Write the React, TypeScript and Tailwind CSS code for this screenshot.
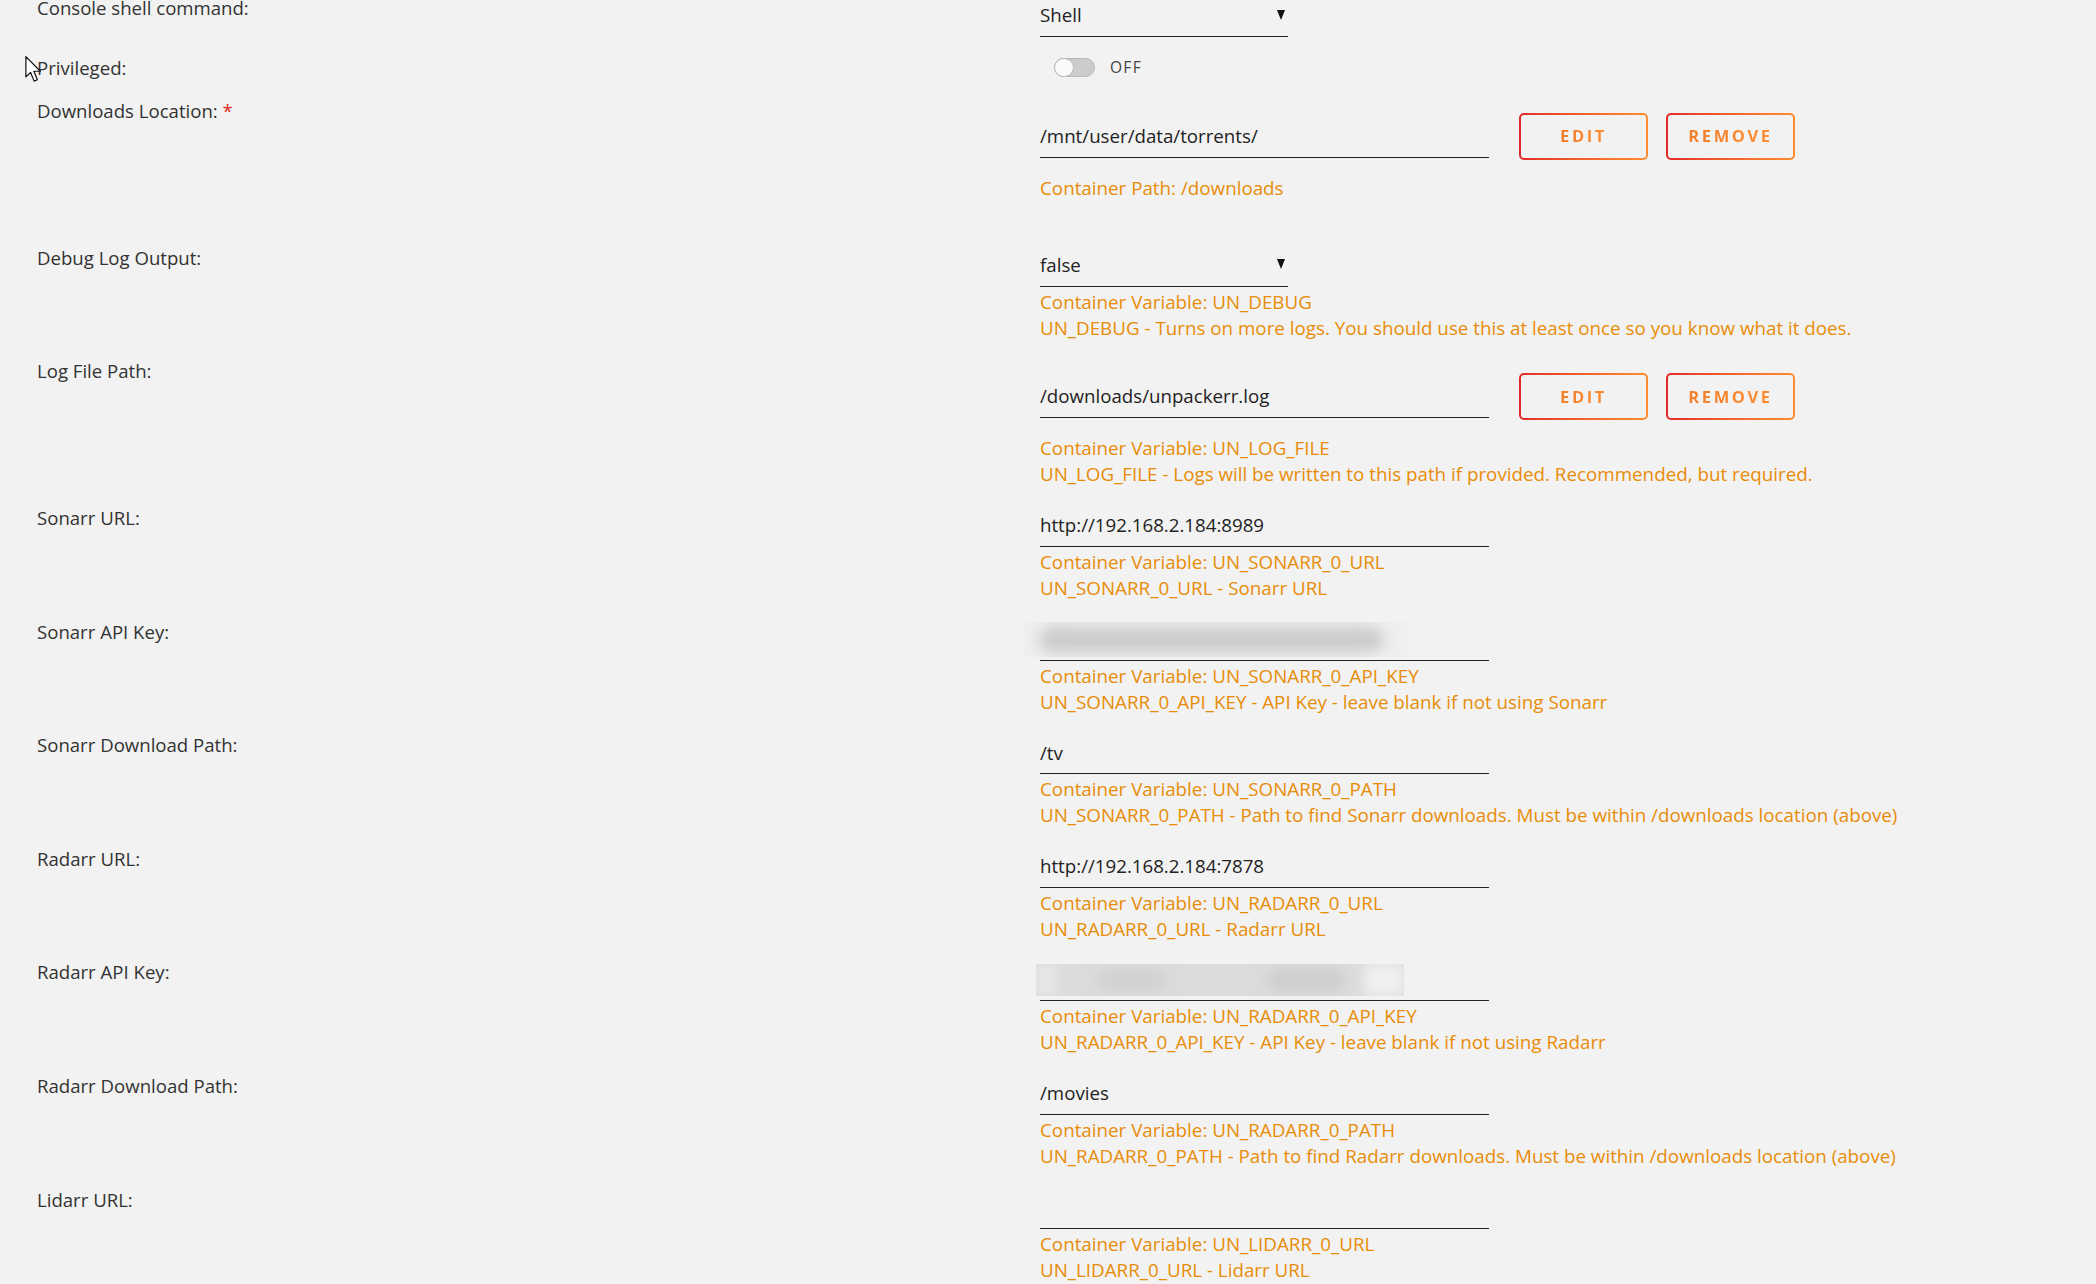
import React from "react";

const font = { fontFamily: '"Open Sans", "Noto Sans", sans-serif' };

function Row({ label, required, children }: { label: string; required?: boolean; children: React.ReactNode }) {
  return (
    <div className="flex pb-[17.6px]">
      <div className="w-[1040px] shrink-0 pl-[37px] text-[18.6px] leading-[26px] text-[#333333]">
        {label}
        {required && <span className="text-[#e22828]"> *</span>}
      </div>
      <div className="flex flex-col">{children}</div>
    </div>
  );
}

function Desc({ lines, gap = "mt-[2px]" }: { lines: string[]; gap?: string }) {
  return (
    <div className={`${gap} flex flex-col text-[18.8px] leading-[26px] text-[#e88c08]`}>
      {lines.map((l, i) => (
        <div key={i} className="h-[26px] whitespace-nowrap">
          {l}
        </div>
      ))}
    </div>
  );
}

function Select({ value }: { value: string }) {
  return (
    <div className="flex h-[42px] w-[248px] items-center justify-between border-b-[1.5px] border-[#222222] pr-[3px] text-[18.7px] text-[#222222]">
      <span>{value}</span>
      <svg width="8" height="10" viewBox="0 0 8 10" className="mt-[-2px]">
        <path d="M0 0 L8 0 L4 10 Z" fill="#111111" />
      </svg>
    </div>
  );
}

function Input({ value, blur }: { value?: string; blur?: "a" | "b" }) {
  return (
    <div className="relative flex h-[42px] w-[449px] items-center border-b-[1.5px] border-[#222222] text-[18.7px] text-[#222222]">
      <span>{value}</span>
      {blur === "a" && (
        <div className="absolute left-[-17px] top-[3px] h-[35px] w-[385px] overflow-hidden bg-[#efefef]">
          <div className="absolute left-[16px] top-[5px] h-[25px] w-[345px] rounded-full bg-[#cbcbcb] blur-[7px]" />
        </div>
      )}
      {blur === "b" && (
        <div className="absolute left-[-4px] top-[5px] h-[32px] w-[368px] overflow-hidden bg-[#dcdcdc]">
          <div className="absolute left-[0px] top-[0px] h-[32px] w-[20px] bg-[#e6e6e6] blur-[4px]" />
          <div className="absolute left-[60px] top-[4px] h-[24px] w-[70px] rounded-full bg-[#d2d2d2] blur-[6px]" />
          <div className="absolute left-[230px] top-[4px] h-[24px] w-[80px] rounded-full bg-[#cfcfcf] blur-[6px]" />
          <div className="absolute right-[0px] top-[0px] h-[32px] w-[40px] bg-[#f0f0f0] blur-[6px]" />
        </div>
      )}
    </div>
  );
}

function GButton({ text }: { text: string }) {
  return (
    <div className="h-[47px] w-[129px] rounded-[5px] bg-gradient-to-r from-[#e22828] to-[#ff8c2f] p-[2px]">
      <div className="flex h-full w-full items-center justify-center rounded-[3px] bg-[#f2f2f2]">
        <span className="bg-gradient-to-r from-[#f27e2a] to-[#ff8c2f] bg-clip-text text-[16.5px] font-bold tracking-[2.6px] text-transparent">
          {text}
        </span>
      </div>
    </div>
  );
}

function InputWithButtons({ value }: { value: string }) {
  return (
    <div className="flex items-center pt-[15px]">
      <Input value={value} />
      <div className="ml-[30px] flex gap-[18px]">
        <GButton text="EDIT" />
        <GButton text="REMOVE" />
      </div>
    </div>
  );
}

export default function App() {
  return (
    <div className="relative h-[1284px] w-full overflow-hidden bg-[#f2f2f2]" style={font}>
      <div className="mt-[-5px] flex flex-col">
        <Row label="Console shell command:">
          <Select value="Shell" />
        </Row>
        <Row label="Privileged:">
          <div className="flex h-[26px] items-center pl-[14px]">
            <div className="relative h-[19px] w-[41px] rounded-full border border-[#b9b9b9] bg-[#cccccc]">
              <div className="absolute left-[-1px] top-[-1px] h-[19px] w-[20px] rounded-full border border-[#b9b9b9] bg-[#fafafa]" />
            </div>
            <span className="ml-[15px] text-[15.5px] tracking-[1.3px] text-[#444444]">OFF</span>
          </div>
        </Row>
        <Row label="Downloads Location:" required>
          <InputWithButtons value="/mnt/user/data/torrents/" />
          <Desc gap="mt-[15px]" lines={["Container Path: /downloads", ""]} />
        </Row>
        <Row label="Debug Log Output:">
          <Select value="false" />
          <Desc
            lines={[
              "Container Variable: UN_DEBUG",
              "UN_DEBUG - Turns on more logs. You should use this at least once so you know what it does.",
            ]}
          />
        </Row>
        <Row label="Log File Path:">
          <InputWithButtons value="/downloads/unpackerr.log" />
          <Desc
            gap="mt-[15px]"
            lines={[
              "Container Variable: UN_LOG_FILE",
              "UN_LOG_FILE - Logs will be written to this path if provided. Recommended, but required.",
            ]}
          />
        </Row>
        <Row label="Sonarr URL:">
          <Input value="http://192.168.2.184:8989" />
          <Desc lines={["Container Variable: UN_SONARR_0_URL", "UN_SONARR_0_URL - Sonarr URL"]} />
        </Row>
        <Row label="Sonarr API Key:">
          <Input blur="a" />
          <Desc
            lines={[
              "Container Variable: UN_SONARR_0_API_KEY",
              "UN_SONARR_0_API_KEY - API Key - leave blank if not using Sonarr",
            ]}
          />
        </Row>
        <Row label="Sonarr Download Path:">
          <Input value="/tv" />
          <Desc
            lines={[
              "Container Variable: UN_SONARR_0_PATH",
              "UN_SONARR_0_PATH - Path to find Sonarr downloads. Must be within /downloads location (above)",
            ]}
          />
        </Row>
        <Row label="Radarr URL:">
          <Input value="http://192.168.2.184:7878" />
          <Desc lines={["Container Variable: UN_RADARR_0_URL", "UN_RADARR_0_URL - Radarr URL"]} />
        </Row>
        <Row label="Radarr API Key:">
          <Input blur="b" />
          <Desc
            lines={[
              "Container Variable: UN_RADARR_0_API_KEY",
              "UN_RADARR_0_API_KEY - API Key - leave blank if not using Radarr",
            ]}
          />
        </Row>
        <Row label="Radarr Download Path:">
          <Input value="/movies" />
          <Desc
            lines={[
              "Container Variable: UN_RADARR_0_PATH",
              "UN_RADARR_0_PATH - Path to find Radarr downloads. Must be within /downloads location (above)",
            ]}
          />
        </Row>
        <Row label="Lidarr URL:">
          <Input value="" />
          <Desc lines={["Container Variable: UN_LIDARR_0_URL", "UN_LIDARR_0_URL - Lidarr URL"]} />
        </Row>
      </div>
      <svg
        className="absolute left-[25px] top-[56px]"
        width="18"
        height="27"
        viewBox="0 0 13 20"
      >
        <path d="M0.5 0.5 L0.5 15.5 L4 12.2 L6.6 18.6 L9 17.6 L6.4 11.3 L11.2 11.3 Z" fill="#ffffff" stroke="#111111" strokeWidth="0.9" strokeLinejoin="round" />
      </svg>
    </div>
  );
}
